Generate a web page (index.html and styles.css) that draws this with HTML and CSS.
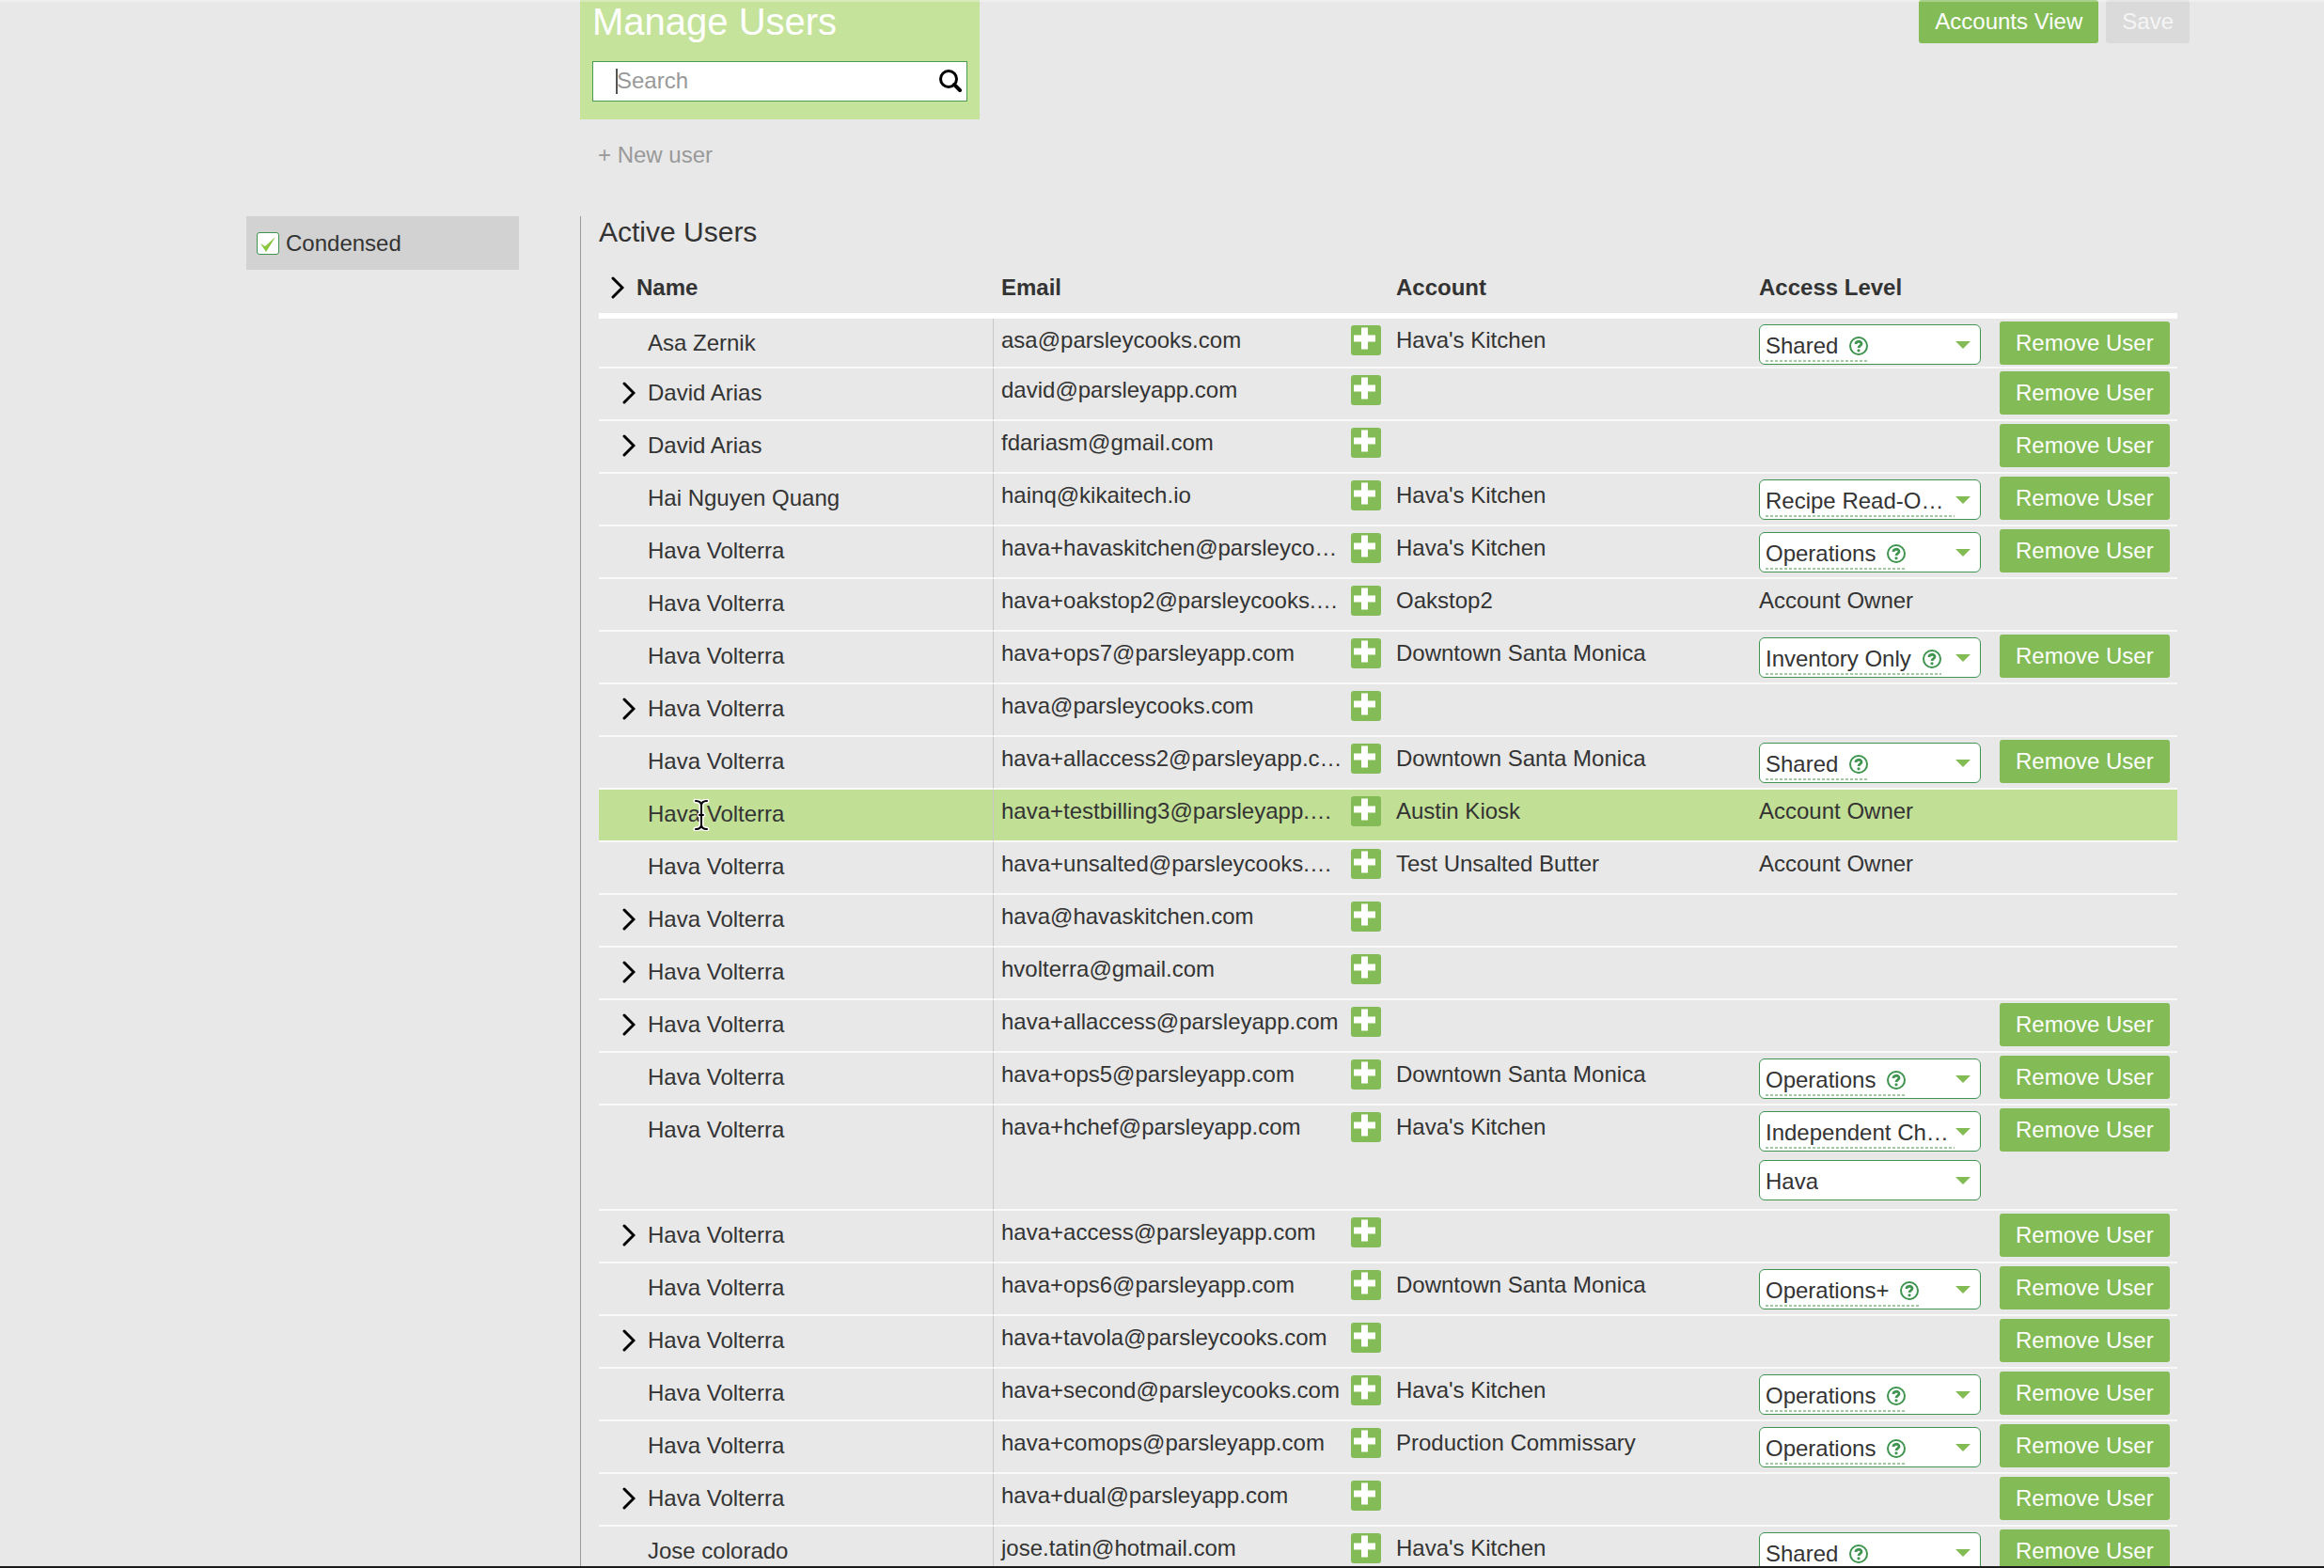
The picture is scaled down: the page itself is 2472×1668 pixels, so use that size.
FILE: index.html
```html
<!DOCTYPE html>
<html lang="en">
<head>
<meta charset="utf-8">
<title>Manage Users</title>
<link rel="stylesheet" href="styles.css">
</head>
<body>
<svg class="sprite" aria-hidden="true">
  <symbol id="chevron" viewBox="0 0 14 24"><path d="M2 2L12 12L2 22" fill="none" stroke="#000" stroke-width="3" stroke-linecap="round"/></symbol>
  <symbol id="plus" viewBox="0 0 32 32"><path d="M14.500 6V22M6.500 14H22.500" fill="none" stroke="#fff" stroke-width="7" stroke-linecap="square"/></symbol>
  <symbol id="help" viewBox="0 0 20 20"><circle cx="10" cy="10" r="9" fill="none" stroke="#3f9550" stroke-width="2"/><path d="M7 8C7 4.400 13 4.400 13 7.800C13 9.600 10 9.600 10 12" fill="none" stroke="#3f9550" stroke-width="2.800"/><circle cx="10" cy="14.800" r="1.600" fill="#3f9550"/></symbol>
  <symbol id="caret" viewBox="0 0 16 8"><path d="M0 0H16L8 8Z" fill="#83bc56"/></symbol>
</svg>
<div class="app">
  <header class="top">
    <div class="banner">
      <h1>Manage Users</h1>
      <div class="search">
        <input type="text" placeholder="Search" aria-label="Search">
        <span class="text-caret"></span>
        <svg class="search-icon" viewBox="0 0 24 24"><circle cx="10" cy="10" r="8.500" fill="none" stroke="#000" stroke-width="3"/><path d="M16 16L22 22" stroke="#000" stroke-width="4" stroke-linecap="round"/></svg>
      </div>
    </div>
    <div class="actions">
      <button type="button" class="btn">Accounts View</button>
      <button type="button" class="btn" disabled>Save</button>
    </div>
    <a class="new-user" href="#new">+ New user</a>
  </header>
  <div class="columns">
    <aside>
      <label class="condensed"><input type="checkbox" checked><svg class="tick" viewBox="0 0 24 24"><path d="M4 12L9 15L20 5L10 21Z" fill="#8cc63f"/></svg>Condensed</label>
    </aside>
    <main>
      <h2>Active Users</h2>
      <table>
        <colgroup><col class="c-name"><col class="c-email"><col class="c-add"><col class="c-account"><col class="c-access"><col class="c-remove"></colgroup>
        <thead>
          <tr><th><div class="name"><svg class="chevron"><use href="#chevron"/></svg>Name</div></th><th class="email">Email</th><th></th><th>Account</th><th>Access Level</th><th></th></tr>
        </thead>
        <tbody>
          <tr><td><div class="name"><i class="chevron"></i>Asa Zernik</div></td><td class="email">asa@parsleycooks.com</td><td class="tool"><button type="button" class="add" aria-label="Add account"><svg><use href="#plus"/></svg></button></td><td>Hava's Kitchen</td><td class="access"><div class="picker"><span class="value"><select aria-label="Access level"><option>Shared</option></select><svg class="help"><use href="#help"/></svg></span><svg class="caret"><use href="#caret"/></svg></div></td><td class="remove"><button type="button" class="btn">Remove User</button></td></tr>
          <tr><td><div class="name"><svg class="chevron"><use href="#chevron"/></svg>David Arias</div></td><td class="email">david@parsleyapp.com</td><td class="tool"><button type="button" class="add" aria-label="Add account"><svg><use href="#plus"/></svg></button></td><td></td><td></td><td class="remove"><button type="button" class="btn">Remove User</button></td></tr>
          <tr><td><div class="name"><svg class="chevron"><use href="#chevron"/></svg>David Arias</div></td><td class="email">fdariasm@gmail.com</td><td class="tool"><button type="button" class="add" aria-label="Add account"><svg><use href="#plus"/></svg></button></td><td></td><td></td><td class="remove"><button type="button" class="btn">Remove User</button></td></tr>
          <tr><td><div class="name"><i class="chevron"></i>Hai Nguyen Quang</div></td><td class="email">hainq@kikaitech.io</td><td class="tool"><button type="button" class="add" aria-label="Add account"><svg><use href="#plus"/></svg></button></td><td>Hava's Kitchen</td><td class="access"><div class="picker"><span class="value full"><select aria-label="Access level"><option>Recipe Read-O…</option></select></span><svg class="caret"><use href="#caret"/></svg></div></td><td class="remove"><button type="button" class="btn">Remove User</button></td></tr>
          <tr><td><div class="name"><i class="chevron"></i>Hava Volterra</div></td><td class="email">hava+havaskitchen@parsleycooks.com</td><td class="tool"><button type="button" class="add" aria-label="Add account"><svg><use href="#plus"/></svg></button></td><td>Hava's Kitchen</td><td class="access"><div class="picker"><span class="value"><select aria-label="Access level"><option>Operations</option></select><svg class="help"><use href="#help"/></svg></span><svg class="caret"><use href="#caret"/></svg></div></td><td class="remove"><button type="button" class="btn">Remove User</button></td></tr>
          <tr><td><div class="name"><i class="chevron"></i>Hava Volterra</div></td><td class="email">hava+oakstop2@parsleycooks.com</td><td class="tool"><button type="button" class="add" aria-label="Add account"><svg><use href="#plus"/></svg></button></td><td>Oakstop2</td><td>Account Owner</td><td></td></tr>
          <tr><td><div class="name"><i class="chevron"></i>Hava Volterra</div></td><td class="email">hava+ops7@parsleyapp.com</td><td class="tool"><button type="button" class="add" aria-label="Add account"><svg><use href="#plus"/></svg></button></td><td>Downtown Santa Monica</td><td class="access"><div class="picker"><span class="value"><select aria-label="Access level"><option>Inventory Only</option></select><svg class="help"><use href="#help"/></svg></span><svg class="caret"><use href="#caret"/></svg></div></td><td class="remove"><button type="button" class="btn">Remove User</button></td></tr>
          <tr><td><div class="name"><svg class="chevron"><use href="#chevron"/></svg>Hava Volterra</div></td><td class="email">hava@parsleycooks.com</td><td class="tool"><button type="button" class="add" aria-label="Add account"><svg><use href="#plus"/></svg></button></td><td></td><td></td><td></td></tr>
          <tr><td><div class="name"><i class="chevron"></i>Hava Volterra</div></td><td class="email">hava+allaccess2@parsleyapp.com</td><td class="tool"><button type="button" class="add" aria-label="Add account"><svg><use href="#plus"/></svg></button></td><td>Downtown Santa Monica</td><td class="access"><div class="picker"><span class="value"><select aria-label="Access level"><option>Shared</option></select><svg class="help"><use href="#help"/></svg></span><svg class="caret"><use href="#caret"/></svg></div></td><td class="remove"><button type="button" class="btn">Remove User</button></td></tr>
          <tr class="active"><td><div class="name"><i class="chevron"></i>Hava Volterra<svg class="pointer" viewBox="0 0 18 34"><g fill="none" stroke-linecap="round"><path d="M3 2Q9 2 9 7V27Q9 32 3 32M15 2Q9 2 9 7M9 27Q9 32 15 32M7 17H11" stroke="#fff" stroke-width="5"/><path d="M3 2Q9 2 9 7V27Q9 32 3 32M15 2Q9 2 9 7M9 27Q9 32 15 32M7 17H11" stroke="#000" stroke-width="2"/></g></svg></div></td><td class="email">hava+testbilling3@parsleyapp.com</td><td class="tool"><button type="button" class="add" aria-label="Add account"><svg><use href="#plus"/></svg></button></td><td>Austin Kiosk</td><td>Account Owner</td><td></td></tr>
          <tr><td><div class="name"><i class="chevron"></i>Hava Volterra</div></td><td class="email">hava+unsalted@parsleycooks.com</td><td class="tool"><button type="button" class="add" aria-label="Add account"><svg><use href="#plus"/></svg></button></td><td>Test Unsalted Butter</td><td>Account Owner</td><td></td></tr>
          <tr><td><div class="name"><svg class="chevron"><use href="#chevron"/></svg>Hava Volterra</div></td><td class="email">hava@havaskitchen.com</td><td class="tool"><button type="button" class="add" aria-label="Add account"><svg><use href="#plus"/></svg></button></td><td></td><td></td><td></td></tr>
          <tr><td><div class="name"><svg class="chevron"><use href="#chevron"/></svg>Hava Volterra</div></td><td class="email">hvolterra@gmail.com</td><td class="tool"><button type="button" class="add" aria-label="Add account"><svg><use href="#plus"/></svg></button></td><td></td><td></td><td></td></tr>
          <tr><td><div class="name"><svg class="chevron"><use href="#chevron"/></svg>Hava Volterra</div></td><td class="email">hava+allaccess@parsleyapp.com</td><td class="tool"><button type="button" class="add" aria-label="Add account"><svg><use href="#plus"/></svg></button></td><td></td><td></td><td class="remove"><button type="button" class="btn">Remove User</button></td></tr>
          <tr><td><div class="name"><i class="chevron"></i>Hava Volterra</div></td><td class="email">hava+ops5@parsleyapp.com</td><td class="tool"><button type="button" class="add" aria-label="Add account"><svg><use href="#plus"/></svg></button></td><td>Downtown Santa Monica</td><td class="access"><div class="picker"><span class="value"><select aria-label="Access level"><option>Operations</option></select><svg class="help"><use href="#help"/></svg></span><svg class="caret"><use href="#caret"/></svg></div></td><td class="remove"><button type="button" class="btn">Remove User</button></td></tr>
          <tr class="tall"><td><div class="name"><i class="chevron"></i>Hava Volterra</div></td><td class="email">hava+hchef@parsleyapp.com</td><td class="tool"><button type="button" class="add" aria-label="Add account"><svg><use href="#plus"/></svg></button></td><td>Hava's Kitchen</td><td class="access"><div class="picker"><span class="value full"><select aria-label="Access level"><option>Independent Ch…</option></select></span><svg class="caret"><use href="#caret"/></svg></div><div class="picker"><span class="value plain"><select aria-label="Chef"><option>Hava</option></select></span><svg class="caret"><use href="#caret"/></svg></div></td><td class="remove"><button type="button" class="btn">Remove User</button></td></tr>
          <tr><td><div class="name"><svg class="chevron"><use href="#chevron"/></svg>Hava Volterra</div></td><td class="email">hava+access@parsleyapp.com</td><td class="tool"><button type="button" class="add" aria-label="Add account"><svg><use href="#plus"/></svg></button></td><td></td><td></td><td class="remove"><button type="button" class="btn">Remove User</button></td></tr>
          <tr><td><div class="name"><i class="chevron"></i>Hava Volterra</div></td><td class="email">hava+ops6@parsleyapp.com</td><td class="tool"><button type="button" class="add" aria-label="Add account"><svg><use href="#plus"/></svg></button></td><td>Downtown Santa Monica</td><td class="access"><div class="picker"><span class="value"><select aria-label="Access level"><option>Operations+</option></select><svg class="help"><use href="#help"/></svg></span><svg class="caret"><use href="#caret"/></svg></div></td><td class="remove"><button type="button" class="btn">Remove User</button></td></tr>
          <tr><td><div class="name"><svg class="chevron"><use href="#chevron"/></svg>Hava Volterra</div></td><td class="email">hava+tavola@parsleycooks.com</td><td class="tool"><button type="button" class="add" aria-label="Add account"><svg><use href="#plus"/></svg></button></td><td></td><td></td><td class="remove"><button type="button" class="btn">Remove User</button></td></tr>
          <tr><td><div class="name"><i class="chevron"></i>Hava Volterra</div></td><td class="email">hava+second@parsleycooks.com</td><td class="tool"><button type="button" class="add" aria-label="Add account"><svg><use href="#plus"/></svg></button></td><td>Hava's Kitchen</td><td class="access"><div class="picker"><span class="value"><select aria-label="Access level"><option>Operations</option></select><svg class="help"><use href="#help"/></svg></span><svg class="caret"><use href="#caret"/></svg></div></td><td class="remove"><button type="button" class="btn">Remove User</button></td></tr>
          <tr><td><div class="name"><i class="chevron"></i>Hava Volterra</div></td><td class="email">hava+comops@parsleyapp.com</td><td class="tool"><button type="button" class="add" aria-label="Add account"><svg><use href="#plus"/></svg></button></td><td>Production Commissary</td><td class="access"><div class="picker"><span class="value"><select aria-label="Access level"><option>Operations</option></select><svg class="help"><use href="#help"/></svg></span><svg class="caret"><use href="#caret"/></svg></div></td><td class="remove"><button type="button" class="btn">Remove User</button></td></tr>
          <tr><td><div class="name"><svg class="chevron"><use href="#chevron"/></svg>Hava Volterra</div></td><td class="email">hava+dual@parsleyapp.com</td><td class="tool"><button type="button" class="add" aria-label="Add account"><svg><use href="#plus"/></svg></button></td><td></td><td></td><td class="remove"><button type="button" class="btn">Remove User</button></td></tr>
          <tr><td><div class="name"><i class="chevron"></i>Jose colorado</div></td><td class="email">jose.tatin@hotmail.com</td><td class="tool"><button type="button" class="add" aria-label="Add account"><svg><use href="#plus"/></svg></button></td><td>Hava's Kitchen</td><td class="access"><div class="picker"><span class="value"><select aria-label="Access level"><option>Shared</option></select><svg class="help"><use href="#help"/></svg></span><svg class="caret"><use href="#caret"/></svg></div></td><td class="remove"><button type="button" class="btn">Remove User</button></td></tr>
        </tbody>
      </table>
    </main>
  </div>
</div>
</body>
</html>
```

FILE: styles.css
```css
* { box-sizing: border-box; }

body {
  margin: 0;
  background: #e8e8e8;
  color: #333;
  font: 24px/28px "Liberation Sans", Arial, sans-serif;
}

button, input, select { font: inherit; color: inherit; }

svg { display: block; }

.sprite { position: absolute; width: 0; height: 0; }

.app {
  height: 100vh;
  overflow: hidden;
  padding: 0 143px 0 262px;
  border-bottom: 2px solid #1c1c1c;
}

.app::before {
  content: "";
  position: absolute;
  inset: 0 0 auto;
  height: 2px;
  background: rgba(255, 255, 255, 0.3);
}

.top {
  display: grid;
  grid-template-columns: 425px 1fr;
  row-gap: 24px;
  padding-left: 355px;
}

.banner {
  padding: 0 13px 19px;
  background: #c5e39b;
}

h1 {
  margin: 0 0 19px;
  font-size: 40px;
  line-height: 46px;
  font-weight: 400;
  color: #fff;
}

.search { position: relative; }

.search input {
  display: block;
  width: 100%;
  height: 43px;
  padding: 0 48px 2px 25px;
  border: 1px solid #4a9a50;
  background: #fff;
  outline: 0;
}

.search input::placeholder { color: #999; opacity: 1; }

.text-caret {
  position: absolute;
  left: 25px;
  top: 8px;
  width: 2px;
  height: 27px;
  background: #555;
}

.search-icon {
  position: absolute;
  right: 6px;
  top: 9px;
  width: 24px;
  height: 24px;
}

.actions {
  display: flex;
  justify-content: flex-end;
  align-items: flex-start;
  gap: 8px;
}

.btn {
  height: 46px;
  padding: 0 17px;
  border: 0;
  border-radius: 3px;
  background: #83bc56;
  color: #fff;
  white-space: nowrap;
}

.btn:disabled { background: #dadada; color: #f5f5f5; }

.new-user {
  justify-self: start;
  margin-left: 19px;
  color: #999;
  text-decoration: none;
}

.columns {
  display: grid;
  grid-template-columns: 290px 1fr;
  column-gap: 65px;
  margin-top: 51px;
}

.condensed {
  position: relative;
  display: flex;
  align-items: center;
  gap: 7px;
  height: 57px;
  padding-left: 11px;
  background: #d2d2d2;
}

.condensed input {
  appearance: none;
  width: 24px;
  height: 24px;
  margin: 0;
  border: 1px solid #3f9550;
  border-radius: 3px;
  background: #fff;
}

.tick {
  position: absolute;
  left: 11px;
  width: 24px;
  height: 24px;
}

main {
  min-height: 100vh;
  padding: 0 13px 0 19px;
  border-left: 1px solid #999;
}

h2 {
  margin: 0;
  font-size: 30px;
  line-height: 34px;
  font-weight: 400;
}

table {
  width: 100%;
  table-layout: fixed;
  border-collapse: separate;
  border-spacing: 0;
}

.c-name { width: 420px; }
.c-email { width: 380px; }
.c-add { width: 48px; }
.c-account { width: 386px; }
.c-access { width: 256px; }
.c-remove { width: 189px; }

th {
  height: 75px;
  padding: 28px 0 13px;
  border-bottom: 6px solid #fff;
  text-align: left;
}

td {
  height: 56px;
  padding: 9px 0 0;
  border-bottom: 2px solid #f9f9f9;
  vertical-align: top;
}

tbody tr:first-child td { height: 53px; }

td:first-child {
  padding-top: 12px;
  border-right: 1px solid #c8c8c8;
}

.active td { background: #c2df96; }

.name {
  position: relative;
  display: flex;
  align-items: center;
  gap: 13px;
  padding-left: 25px;
}

th .name { padding-left: 13px; }

.chevron { width: 14px; height: 24px; }

.pointer {
  position: absolute;
  left: 100px;
  top: -2px;
  width: 18px;
  height: 34px;
}

.email {
  padding-left: 8px;
  padding-right: 9px;
  overflow: hidden;
  text-overflow: ellipsis;
  white-space: nowrap;
}

.tool { padding-top: 7px; }

.add {
  display: block;
  width: 32px;
  height: 32px;
  padding: 0;
  border: 0;
  border-radius: 3px;
  background: #83bc56;
}

.add svg { width: 32px; height: 32px; }

.access { padding-top: 6px; }

.tall td { height: 112px; }

.picker {
  display: flex;
  align-items: center;
  justify-content: space-between;
  width: 236px;
  height: 43px;
  padding: 0 10px 0 6px;
  border: 1px solid #3f9550;
  border-radius: 6px;
  background: #fff;
}

.picker + .picker { margin-top: 9px; }

.value {
  display: flex;
  align-items: center;
  gap: 12px;
  height: 31px;
  margin-top: 5px;
  padding-bottom: 2px;
  background: repeating-linear-gradient(90deg, #a3cba3 0 3px, transparent 3px 5px) left bottom / 100% 2px no-repeat;
}

.value.full { width: 201px; }

.value.plain { background: none; }

.value select {
  appearance: none;
  field-sizing: content;
  padding: 0;
  border: 0;
  background: none;
}

.help { flex: none; width: 20px; height: 20px; }

.caret { flex: none; width: 16px; height: 8px; }

.remove { padding-top: 3px; }

.remove .btn { display: block; }
```
